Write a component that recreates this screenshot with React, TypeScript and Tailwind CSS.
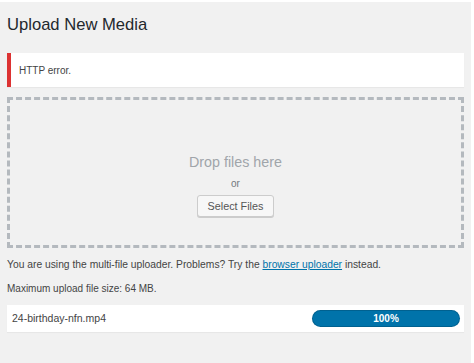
export default function App() {
  return (
    <div className="w-[474px] h-[363px] bg-white overflow-hidden font-['Liberation_Sans',Arial,sans-serif]">
      <div className="w-[471px] h-[361px] mt-[2px] bg-[#f1f1f1] px-[7px] flex flex-col">
        <h1 className="mt-[12px] text-[16.6px] leading-[22px] text-[#23282d]">Upload New Media</h1>

        <div className="mt-[17px] h-[34px] bg-white border-l-4 border-[#dc3232] shadow-[0_1px_1px_rgba(0,0,0,0.04)] flex items-center pl-[8px]">
          <p className="text-[10px] text-[#444]">HTTP error.</p>
        </div>

        <div className="mt-[10px] h-[151px] border-[3px] border-dashed border-[#b4b9be] flex flex-col items-center">
          <p className="mt-[53px] text-[14.3px] leading-[18px] text-[#a0a5aa]">Drop files here</p>
          <p className="mt-[7px] text-[10px] leading-[12px] text-[#72777c]">or</p>
          <button className="mt-[5px] h-[22px] px-[10px] bg-[#f7f7f7] border border-[#ccc] rounded-[3px] shadow-[0_1px_0_#ccc] text-[10.8px] text-[#555]">
            Select Files
          </button>
        </div>

        <p className="mt-[10px] text-[10.3px] leading-[14px] text-[#444]">
          You are using the multi-file uploader. Problems? Try the{' '}
          <a href="#" className="text-[#0073aa] underline">browser uploader</a> instead.
        </p>
        <p className="mt-[10px] text-[10px] leading-[14px] text-[#444]">Maximum upload file size: 64 MB.</p>

        <div className="mt-[9px] h-[27px] bg-white shadow-[0_1px_1px_rgba(0,0,0,0.04)] flex items-center justify-between pl-[5px] pr-[4px]">
          <span className="text-[10.5px] text-[#444]">24-birthday-nfn.mp4</span>
          <div className="w-[148px] h-[17px] rounded-full bg-[#0073aa] shadow-[inset_0_0_0_1px_rgba(0,0,0,0.15)] flex items-center justify-center">
            <span className="text-[10px] font-bold text-white">100%</span>
          </div>
        </div>
      </div>
    </div>
  );
}
